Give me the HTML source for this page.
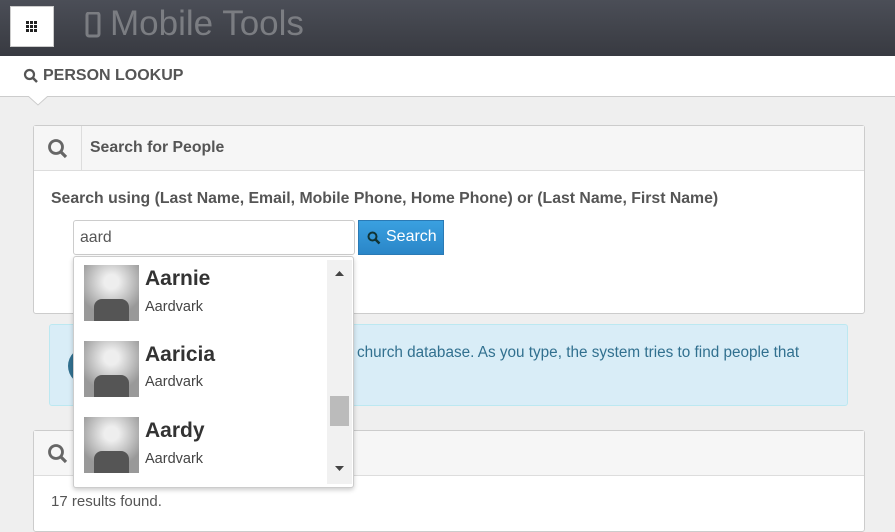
<!DOCTYPE html><html><head><style>
body{margin:0;width:895px;height:512px;overflow:hidden;background:#efefef;font-family:"Liberation Sans",sans-serif;position:relative}
.hdr{position:absolute;left:0;top:0;width:895px;height:56px;background:linear-gradient(#4b4e57,#383a41)}
.gbtn{position:absolute;left:10px;top:6px;width:42px;height:39px;background:#fff;border:1px solid #ccc}
.title{position:absolute;left:110px;top:4px;font-size:35px;color:#7b7d82}
.sub{position:absolute;left:0;top:56px;width:895px;height:40px;background:#fff;border-bottom:1px solid #ccc}
.sub span{position:absolute;left:43px;top:11px;font-weight:bold;font-size:16px;color:#555}
.panel{position:absolute;background:#fff;border:1px solid #ccc;border-radius:3px}
.ph{position:absolute;left:0;top:0;right:0;height:44px;background:#f6f6f6;border-bottom:1px solid #ddd}
.ph .ic{position:absolute;left:0;top:0;width:47px;height:44px;border-right:1px solid #ddd}
.t{position:absolute;font-size:15.8px;color:#555}
.dd{position:absolute;left:73px;top:256px;width:279px;height:230px;background:#fff;border:1px solid #ccc;border-radius:3px;box-shadow:0 2px 5px rgba(0,0,0,.2)}
.item{position:absolute;left:10px;width:230px;height:56px}
.av{position:absolute;left:0;top:0;width:55px;height:56px;background:radial-gradient(circle at 50% 30%,#eee 15%,#999 70%)}
.av:after{content:"";position:absolute;left:10px;bottom:0;width:35px;height:22px;background:#555;border-radius:8px 8px 0 0}
.nm{position:absolute;left:61px;font-size:21px;font-weight:bold;color:#333}
.ln{position:absolute;left:61px;font-size:14.5px;color:#444}
</style></head><body>
<div class="hdr"><div class="gbtn"><svg width="42" height="39"><g fill="#222"><rect x="15" y="14" width="3" height="3"/><rect x="19" y="14" width="3" height="3"/><rect x="23" y="14" width="3" height="3"/><rect x="15" y="18" width="3" height="3"/><rect x="19" y="18" width="3" height="3"/><rect x="23" y="18" width="3" height="3"/><rect x="15" y="22" width="3" height="3"/><rect x="19" y="22" width="3" height="3"/><rect x="23" y="22" width="3" height="3"/></g></svg></div>
<svg style="position:absolute;left:85px;top:12px" width="17" height="26"><rect x="2" y="1" width="12" height="23" rx="2" fill="none" stroke="#7b7d82" stroke-width="3"/></svg>
<div class="title">Mobile Tools</div></div>
<div class="sub"><svg style="position:absolute;left:23px;top:12px" width="16" height="16"><circle cx="6.5" cy="6.5" r="4.5" fill="none" stroke="#555" stroke-width="2.2"/><path d="M10 10l4 4" stroke="#555" stroke-width="2.5"/></svg><span>PERSON LOOKUP</span></div>
<svg style="position:absolute;left:28px;top:96px" width="22" height="11"><path d="M0 0L10 9L20 0" fill="#fff" stroke="#ccc"/></svg>
<div class="panel" style="left:33px;top:125px;width:830px;height:187px"><div class="ph"><div class="ic"><svg style="position:absolute;left:13px;top:12px" width="22" height="22"><circle cx="9" cy="9" r="6.5" fill="none" stroke="#666" stroke-width="2.8"/><path d="M14 14l5 5" stroke="#666" stroke-width="3.2"/></svg></div><div class="t" style="left:56px;top:13px;font-weight:bold">Search for People</div></div>
<div class="t" style="left:17px;top:64px;font-weight:bold">Search using (Last Name, Email, Mobile Phone, Home Phone) or (Last Name, First Name)</div>
<div style="position:absolute;left:39px;top:94px;width:280px;height:33px;border:1px solid #ccc;border-radius:3px"><span class="t" style="left:6px;top:8px;color:#555">aard</span></div>
<div style="position:absolute;left:324px;top:94px;width:84px;height:33px;background:linear-gradient(#3aa0e0,#2a86c8);border:1px solid #2a7ab5;color:#fff;font-size:16px"><svg style="position:absolute;left:8px;top:10px" width="14" height="14"><circle cx="5.5" cy="5.5" r="4" fill="none" stroke="#133" stroke-width="2"/><path d="M8.5 8.5l4 4" stroke="#133" stroke-width="2.5"/></svg><span style="position:absolute;left:27px;top:7px">Search</span></div></div>
<div style="position:absolute;left:49px;top:324px;width:797px;height:80px;background:#d9edf7;border:1px solid #bce8f1;border-radius:3px"><div style="position:absolute;left:18px;top:22px;width:38px;height:38px;border-radius:50%;background:#31708f"></div><div class="t" style="left:307px;top:19px;color:#31708f;font-size:15.3px">church database. As you type, the system tries to find people that</div></div>
<div class="panel" style="left:33px;top:430px;width:830px;height:100px"><div class="ph"><div class="ic"><svg style="position:absolute;left:13px;top:12px" width="22" height="22"><circle cx="9" cy="9" r="6.5" fill="none" stroke="#666" stroke-width="2.8"/><path d="M14 14l5 5" stroke="#666" stroke-width="3.2"/></svg></div></div><div class="t" style="left:17px;top:62px;font-size:15px">17 results found.</div></div>
<div class="dd">
<div class="item" style="top:8px"><div class="av"></div><div class="nm" style="top:2px">Aarnie</div><div class="ln" style="top:34px">Aardvark</div></div>
<div class="item" style="top:84px"><div class="av"></div><div class="nm" style="top:2px">Aaricia</div><div class="ln" style="top:33px">Aardvark</div></div>
<div class="item" style="top:160px"><div class="av"></div><div class="nm" style="top:2px">Aardy</div><div class="ln" style="top:34px">Aardvark</div></div>
<div style="position:absolute;left:253px;top:3px;width:25px;height:224px;background:#f1f1f1"><svg width="25" height="224"><path d="M8 16h9l-4.5-5z M8 206h9l-4.5 5z" fill="#444"/><rect x="3" y="136" width="19" height="30" fill="#bbb"/></svg></div>
</div>
</body></html>
